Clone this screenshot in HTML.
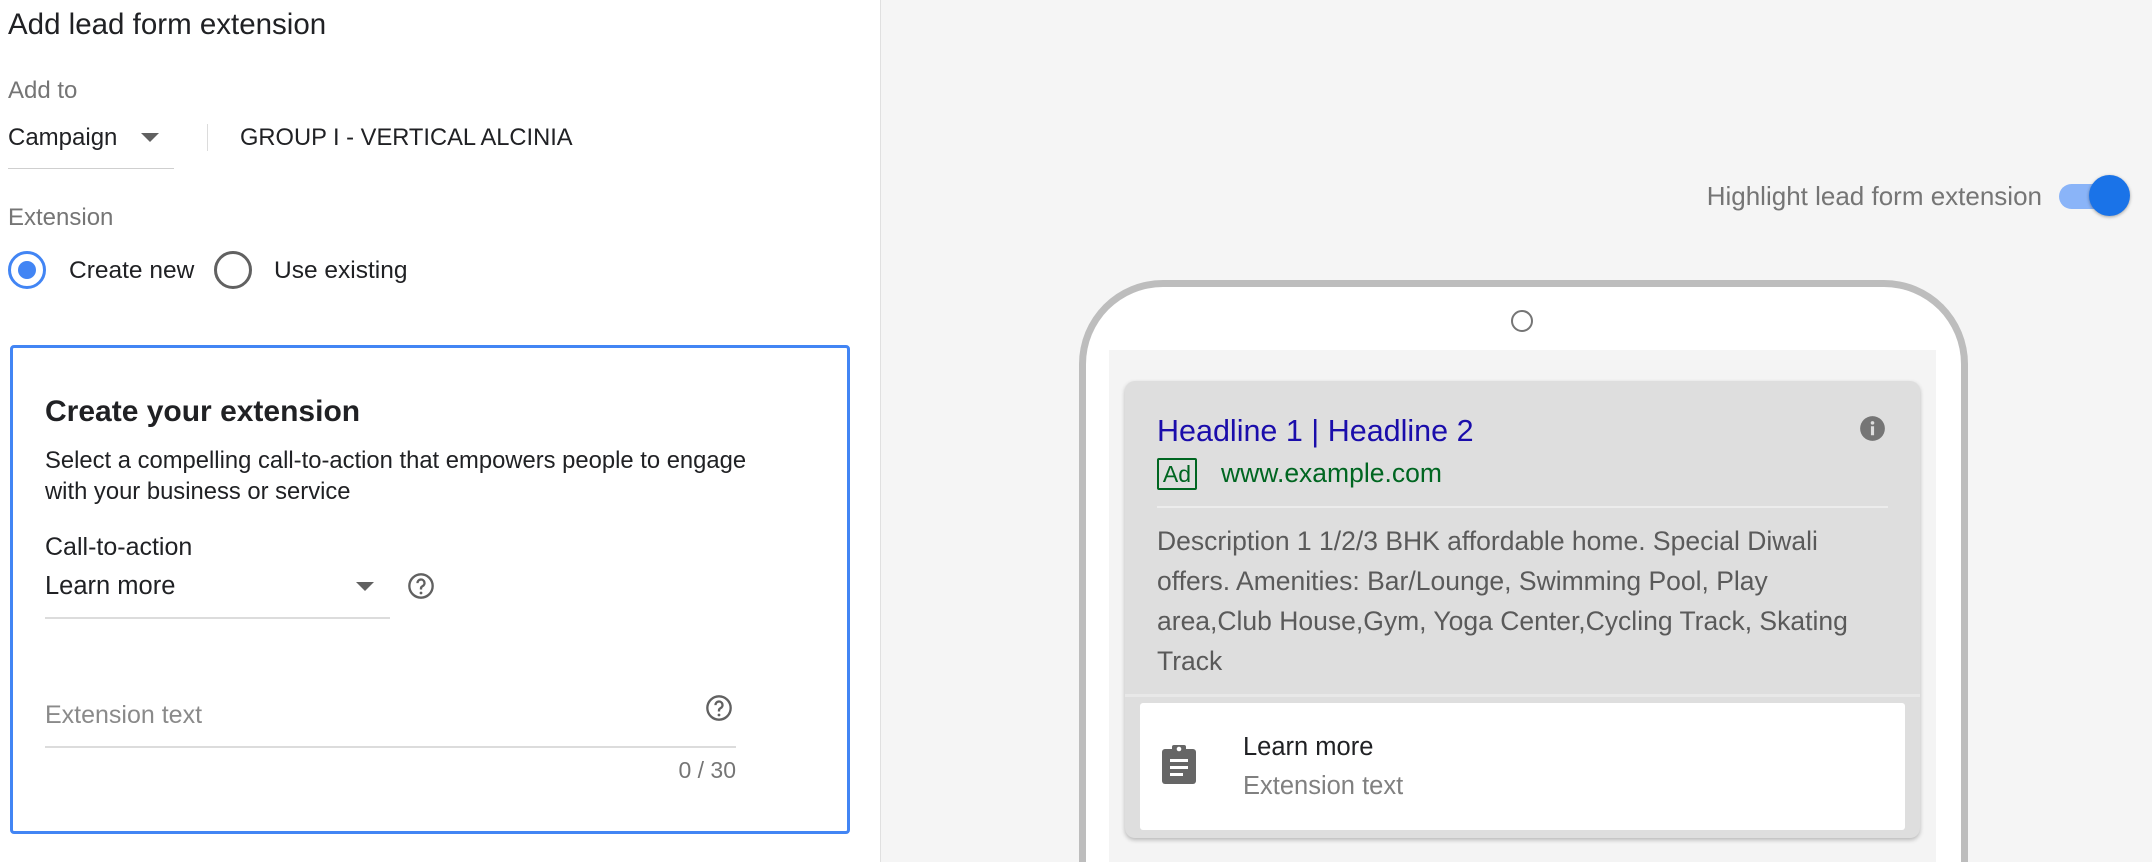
<!DOCTYPE html>
<html style="overflow:hidden;width:2152px;height:862px"><head><meta charset="utf-8"><style>
*{margin:0;padding:0;box-sizing:border-box}
html,body{width:2152px;height:862px;overflow:hidden}
body{font-family:"Liberation Sans",Arial,sans-serif;background:#f5f5f5}
#wrap{position:relative;width:2152px;height:862px;overflow:hidden}
.a{position:absolute;white-space:nowrap}
#left{position:absolute;left:0;top:0;width:881px;height:862px;background:#fff;border-right:1px solid #e0e0e0}
</style></head><body><div id="wrap">
<div id="left">
<div class="a" style="left:8px;top:8px;font-size:29.5px;line-height:34px;color:#202124">Add lead form extension</div>
<div class="a" style="left:8px;top:77px;font-size:24px;line-height:28px;color:#757575">Add to</div>
<div class="a" style="left:8px;top:124px;font-size:24px;line-height:28px;color:#202124">Campaign</div>
<div class="a" style="left:141px;top:133px;width:0;height:0;border-left:9px solid transparent;border-right:9px solid transparent;border-top:9px solid #616161"></div>
<div class="a" style="left:8px;top:168px;width:166px;height:1px;background:#cfcfcf"></div>
<div class="a" style="left:207px;top:124px;width:1px;height:27px;background:#dcdcdc"></div>
<div class="a" style="left:240px;top:124px;font-size:23.7px;line-height:28px;color:#202124">GROUP I - VERTICAL ALCINIA</div>
<div class="a" style="left:8px;top:204px;font-size:24px;line-height:28px;color:#757575">Extension</div>
<div class="a" style="left:8px;top:251px;width:38px;height:38px;border-radius:50%;border:3px solid #4285f4"></div>
<div class="a" style="left:18px;top:261px;width:18px;height:18px;border-radius:50%;background:#4285f4"></div>
<div class="a" style="left:69px;top:257px;font-size:24.5px;line-height:28px;color:#202124">Create new</div>
<div class="a" style="left:214px;top:251px;width:38px;height:38px;border-radius:50%;border:3px solid #616161"></div>
<div class="a" style="left:274px;top:257px;font-size:24.5px;line-height:28px;color:#202124">Use existing</div>

<div class="a" style="left:10px;top:345px;width:840px;height:489px;border:3px solid #4285f4;border-radius:4px"></div>
<div class="a" style="left:45px;top:394px;font-size:30px;line-height:36px;color:#202124;font-weight:bold">Create your extension</div>
<div class="a" style="left:45px;top:445px;font-size:23.8px;line-height:31px;color:#202124">Select a compelling call-to-action that empowers people to engage<br>with your business or service</div>
<div class="a" style="left:45px;top:533px;font-size:25px;line-height:28px;color:#202124">Call-to-action</div>
<div class="a" style="left:45px;top:572px;font-size:25.5px;line-height:28px;color:#202124">Learn more</div>
<div class="a" style="left:356px;top:582px;width:0;height:0;border-left:9px solid transparent;border-right:9px solid transparent;border-top:9px solid #616161"></div>
<div class="a" style="left:45px;top:617px;width:345px;height:2px;background:#dcdcdc"></div>
<svg class="a" style="left:407px;top:572px" width="28" height="28" viewBox="0 0 24 24"><circle cx="12" cy="12" r="10" fill="none" stroke="#616161" stroke-width="2"/><path d="M9 9.5a3 3 0 1 1 4.2 2.7c-.8.4-1.2 1-1.2 1.8V15" fill="none" stroke="#616161" stroke-width="2"/><circle cx="12" cy="18" r="1.2" fill="#616161"/></svg>
<div class="a" style="left:45px;top:701px;font-size:25px;line-height:28px;color:#8a8a8a">Extension text</div>
<svg class="a" style="left:705px;top:694px" width="28" height="28" viewBox="0 0 24 24"><circle cx="12" cy="12" r="10" fill="none" stroke="#616161" stroke-width="2"/><path d="M9 9.5a3 3 0 1 1 4.2 2.7c-.8.4-1.2 1-1.2 1.8V15" fill="none" stroke="#616161" stroke-width="2"/><circle cx="12" cy="18" r="1.2" fill="#616161"/></svg>
<div class="a" style="left:45px;top:746px;width:691px;height:2px;background:#dcdcdc"></div>
<div class="a" style="left:636px;top:757px;width:100px;text-align:right;font-size:23px;line-height:26px;color:#757575">0 / 30</div>
</div>

<div class="a" style="right:110px;top:181px;font-size:26px;line-height:30px;color:#757575">Highlight lead form extension</div>
<div class="a" style="left:2059px;top:184px;width:58px;height:25px;border-radius:13px;background:#8ab4f8"></div>
<div class="a" style="left:2089px;top:175px;width:41px;height:41px;border-radius:50%;background:#1a73e8;box-shadow:0 1px 3px rgba(0,0,0,.35)"></div>

<div class="a" style="left:1079px;top:280px;width:889px;height:600px;border:7px solid #bdbdbd;border-bottom:none;border-radius:84px 84px 0 0;background:#fff"></div>
<div class="a" style="left:1511px;top:310px;width:22px;height:22px;border-radius:50%;border:2px solid #757575"></div>
<div class="a" style="left:1109px;top:350px;width:827px;height:512px;background:#f4f4f4"></div>
<div class="a" style="left:1125px;top:381px;width:795px;height:457px;background:#dedede;border-radius:10px;box-shadow:0 2px 4px rgba(0,0,0,.25)"></div>
<div class="a" style="left:1157px;top:413px;font-size:30.5px;line-height:36px;color:#1a0dab">Headline 1 | Headline 2</div>
<svg class="a" style="left:1859px;top:415px" width="27" height="27" viewBox="0 0 24 24"><circle cx="12" cy="12" r="11" fill="#757575"/><rect x="10.6" y="10" width="2.8" height="8" fill="#dedede"/><circle cx="12" cy="7" r="1.6" fill="#dedede"/></svg>
<div class="a" style="left:1157px;top:458px;width:40px;height:32px;border:2px solid #006621;border-radius:2px;color:#006621;font-size:23px;line-height:28px;text-align:center">Ad</div>
<div class="a" style="left:1221px;top:458px;font-size:26.5px;line-height:30px;color:#006621">www.example.com</div>
<div class="a" style="left:1157px;top:506px;width:731px;height:2px;background:#ececec"></div>
<div class="a" style="left:1157px;top:521px;font-size:26.5px;line-height:40px;color:#5a5a5a">Description 1 1/2/3 BHK affordable home. Special Diwali<br>offers. Amenities: Bar/Lounge, Swimming Pool, Play<br>area,Club House,Gym, Yoga Center,Cycling Track, Skating<br>Track</div>
<div class="a" style="left:1125px;top:694px;width:795px;height:3px;background:#e8e8e8"></div>
<div class="a" style="left:1140px;top:703px;width:765px;height:127px;background:#fff;border-radius:3px"></div>
<svg class="a" style="left:1161px;top:744px" width="36" height="40" viewBox="0 0 36 40"><rect x="1" y="5" width="34" height="35" rx="3" fill="#666"/><rect x="11" y="1" width="14" height="8" rx="2" fill="#666"/><circle cx="18" cy="5" r="2.3" fill="#fff"/><rect x="9" y="15" width="18" height="3" fill="#fff"/><rect x="9" y="22" width="18" height="3" fill="#fff"/><rect x="9" y="29" width="13" height="3" fill="#fff"/></svg>
<div class="a" style="left:1243px;top:732px;font-size:25.5px;line-height:30px;color:#202124">Learn more</div>
<div class="a" style="left:1243px;top:771px;font-size:25.5px;line-height:30px;color:#808080">Extension text</div>
</div></body></html>
